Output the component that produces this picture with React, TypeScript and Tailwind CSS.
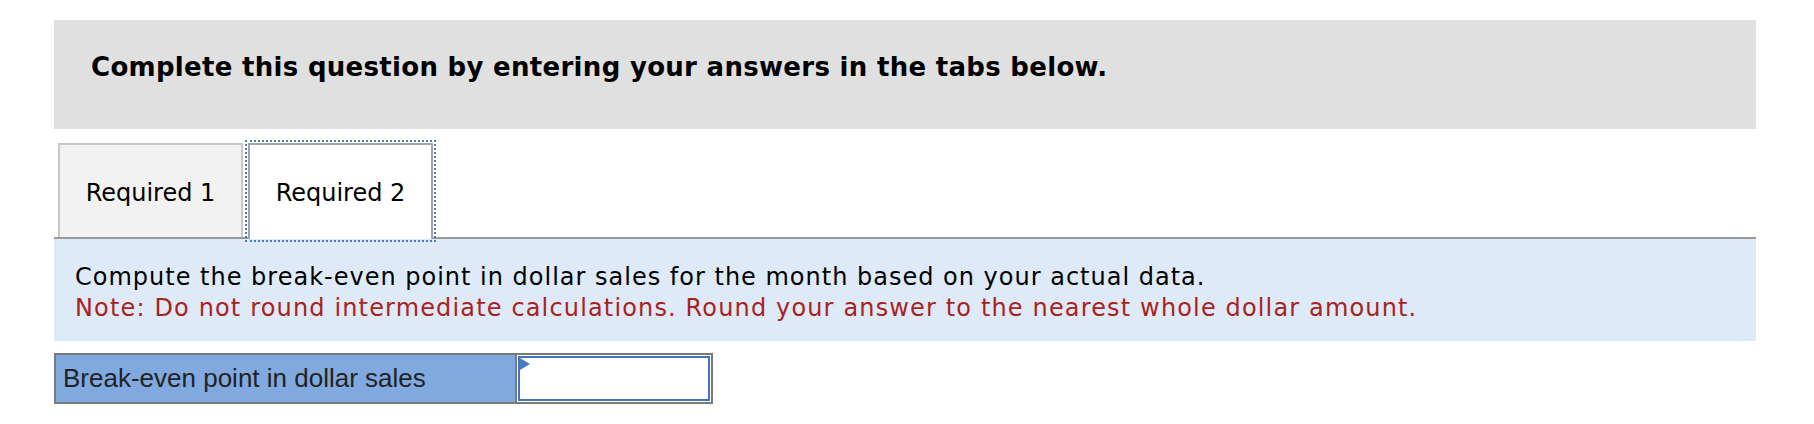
const tabFont = { fontFamily: "'DejaVu Sans', Verdana, sans-serif" };

export default function App() {
  return (
    <div className="bg-white w-[1814px] h-[424px] pt-[20px] pl-[54px]">
      <div className="w-[1702px]">
        <div className="h-[109px] bg-[#e0e0e0] pl-[37px] pt-[28px]" style={tabFont}>
          <h2 className="text-[26px] font-bold tracking-[0.3px] text-black">
            Complete this question by entering your answers in the tabs below.
          </h2>
        </div>

        <div className="mt-[14px] flex items-end border-b-2 border-[#9a9a9a] pl-[4px] h-[96px]" style={tabFont}>
          <button className="w-[185px] h-[94px] pt-[4px] bg-[#f2f2f2] border-2 border-b-0 border-[#c8c8c8] text-[24px] text-black">
            Required 1
          </button>
          <button className="relative ml-[5px] -mb-[2px] w-[185px] h-[96px] pt-[2px] bg-white border-2 border-b-0 border-[#a4a4a4] text-[24px] text-black outline-2 outline-dotted outline-offset-[1px] outline-[#4a7cc0]">
            Required 2
          </button>
        </div>

        <div className="bg-[#deeaf7] h-[102px] pl-[21px] pt-[23px] text-[24px] leading-[31px]" style={tabFont}>
          <p className="text-black tracking-[1px]">
            Compute the break-even point in dollar sales for the month based on your actual data.
          </p>
          <p className="text-[#a8231e] tracking-[1.15px]">
            Note: Do not round intermediate calculations. Round your answer to the nearest whole dollar amount.
          </p>
        </div>

        <div className="mt-[12px] w-[659px] h-[51px] flex border-2 border-[#7a7a7a]">
          <div
            className="w-[459px] bg-[#7fa9df] flex items-center pl-[7px] text-[26px] text-[#222]"
            style={{ fontFamily: "'Liberation Sans', Arial, sans-serif" }}
          >
            Break-even point in dollar sales
          </div>
          <div className="flex-1 border-l-2 border-[#7a7a7a] p-[1px] bg-white">
            <div className="relative h-full border-2 border-[#4673bd] bg-white">
              <svg className="absolute left-0 top-0" width="10" height="12" viewBox="0 0 10 12">
                <polygon points="0,0 10,6 0,12" fill="#4a7cc0" />
              </svg>
              <input className="w-full h-full outline-none bg-transparent" aria-label="Break-even point in dollar sales" />
            </div>
          </div>
        </div>
      </div>
    </div>
  );
}
